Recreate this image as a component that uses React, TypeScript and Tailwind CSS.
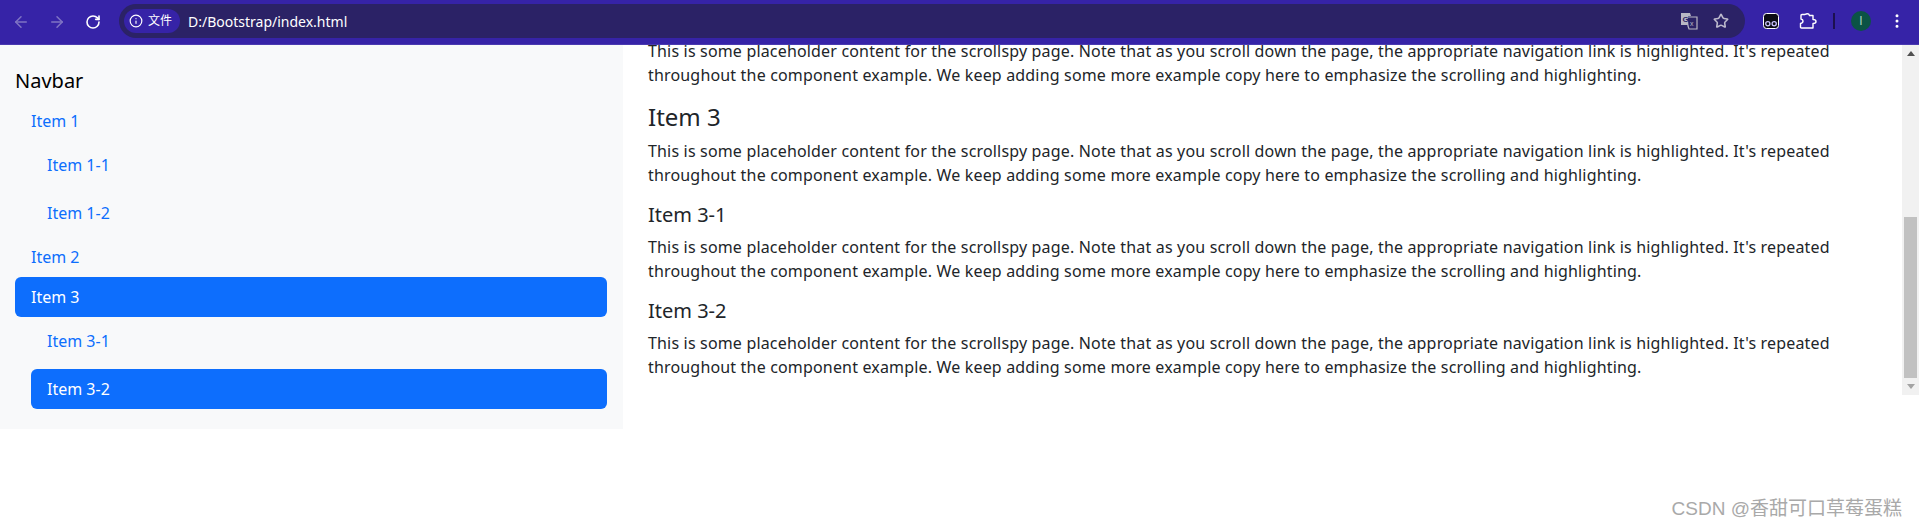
import { ArrowLeft, ArrowRight, RotateCw, Info, Star, EllipsisVertical } from "lucide-react";

const COPY =
  "This is some placeholder content for the scrollspy page. Note that as you scroll down the page, the appropriate navigation link is highlighted. It's repeated throughout the component example. We keep adding some more example copy here to emphasize the scrolling and highlighting.";

function NavItem({ label, active, sub }: { label: string; active?: boolean; sub?: boolean }) {
  return (
    <a
      className={`block h-10 px-4 py-2 leading-6 rounded-md ${sub ? "my-1" : ""} ${active ? "bg-[#0d6efd] text-white" : "text-[#0d6efd]"}`}
    >
      {label}
    </a>
  );
}

function TranslateIcon() {
  return (
    <svg width="18" height="18" viewBox="0 0 18 18">
      <path d="M1 1h9l1 3h-3v9H1z" fill="#b9b7c4" />
      <path d="M7 5h10v12H9l-1-3z" fill="none" stroke="#b9b7c4" strokeWidth="1.2" />
      <text x="2.5" y="9.5" fontSize="8" fontWeight="700" fill="#2b2266" fontFamily="Liberation Sans, sans-serif">G</text>
      <text x="10" y="14" fontSize="7" fill="#b9b7c4" fontFamily="Liberation Sans, sans-serif">x</text>
    </svg>
  );
}

function GlassesIcon() {
  return (
    <svg width="16" height="16" viewBox="0 0 16 16">
      <rect x="0.5" y="0.5" width="15" height="15" rx="3" fill="#0c0c14" stroke="#ffffff" />
      <circle cx="4.8" cy="10.8" r="2.1" fill="#0c0c14" stroke="#c9c2ff" strokeWidth="1.3" />
      <circle cx="11.2" cy="10.8" r="2.1" fill="#0c0c14" stroke="#c9c2ff" strokeWidth="1.3" />
    </svg>
  );
}

function PuzzleIcon() {
  return (
    <svg width="18" height="16" viewBox="0 0 18 16" fill="none" stroke="#ffffff" strokeWidth="1.4" strokeLinejoin="round">
      <path d="M2 2.5Q2 1.5 3 1.5H6Q7 .8 8.5 .8Q10 .8 10.5 2.5H14V6.5Q17 6.5 17 8.5Q17 10.5 14 10.5V15H2.5Q1.5 15 1.5 14V10.5Q4 10 4 8Q4 6.5 2 6Z" />
    </svg>
  );
}

function Toolbar() {
  return (
    <div className="h-[45px] shrink-0 flex items-center bg-[#3623a7] border-b border-[#4a3ab0] font-['Noto_Sans','Noto_Sans_CJK_SC',sans-serif]">
      <div className="flex items-center w-[119px] pl-[12px] gap-[18px] -mt-px">
        <ArrowLeft size={18} className="text-[#7f74c4]" />
        <ArrowRight size={18} className="text-[#7f74c4]" />
        <RotateCw size={16} strokeWidth={2.4} className="text-white ml-px" />
      </div>
      <div className="flex-1 h-[34px] -mt-[2px] rounded-full bg-[#2b2266] flex items-center pl-[5px] pr-[16px]">
        <div className="h-6 w-14 rounded-full bg-[#3623a7] flex items-center pl-[5px] gap-[5px] text-white text-xs">
          <Info size={14} />
          <span>文件</span>
        </div>
        <span className="ml-[8px] text-white text-[14px]">D:/Bootstrap/index.html</span>
        <div className="ml-auto flex items-center gap-[15px]">
          <TranslateIcon />
          <Star size={16} className="text-[#bcb9cc]" strokeWidth={2.4} />
        </div>
      </div>
      <div className="w-[174px] flex items-center -mt-[2px] pl-[18px]">
        <GlassesIcon />
        <div className="ml-5"><PuzzleIcon /></div>
        <div className="ml-[16px] w-[2px] h-4 bg-[#1c1050]" />
        <div className="ml-4 w-5 h-5 rounded-full bg-[#0b5345] flex items-center justify-center text-[#a8d0c3] text-xs font-['Liberation_Sans',sans-serif]">I</div>
        <EllipsisVertical size={18} className="ml-[17px] text-white" />
      </div>
    </div>
  );
}

function Sidebar() {
  return (
    <nav className="w-[623px] shrink-0 h-[384px] bg-[#f8f9fa] pl-[15px] pr-4 py-4 flex flex-col">
      <a className="block h-10 py-[5px] text-xl leading-[30px] text-black">Navbar</a>
      <NavItem label="Item 1" />
      <div className="ml-4 flex flex-col">
        <NavItem label="Item 1-1" sub />
        <NavItem label="Item 1-2" sub />
      </div>
      <NavItem label="Item 2" />
      <NavItem label="Item 3" active />
      <div className="ml-4 flex flex-col">
        <NavItem label="Item 3-1" sub />
        <NavItem label="Item 3-2" active sub />
      </div>
    </nav>
  );
}

function Scrollbar() {
  return (
    <div className="w-[17px] shrink-0 bg-[#f1f1f1] flex flex-col items-center">
      <div className="h-[17px] flex items-center justify-center">
        <div className="border-x-4 border-x-transparent border-b-[5px] border-b-[#505050]" />
      </div>
      <div className="h-[155px]" />
      <div className="w-[13px] flex-1 bg-[#c1c1c1]" />
      <div className="h-[17px] flex items-center justify-center">
        <div className="border-x-4 border-x-transparent border-t-[5px] border-t-[#a3a3a3]" />
      </div>
    </div>
  );
}

function Content() {
  return (
    <div className="flex-1 flex h-[350px]">
      <div className="flex-1 overflow-hidden pl-[25px] pr-[60px] text-[#212529]">
        <p className="-mt-[6px] mb-[15px] leading-6 tracking-[0.17px]">{COPY}</p>
        <h4 className="text-2xl leading-[29px] mb-2">Item 3</h4>
        <p className="mb-4 leading-6 tracking-[0.17px]">{COPY}</p>
        <h5 className="text-xl leading-6 mb-2">Item 3-1</h5>
        <p className="mb-4 leading-6 tracking-[0.17px]">{COPY}</p>
        <h5 className="text-xl leading-6 mb-2">Item 3-2</h5>
        <p className="mb-4 leading-6 tracking-[0.17px]">{COPY}</p>
      </div>
      <Scrollbar />
    </div>
  );
}

export default function App() {
  return (
    <div className="relative w-[1919px] h-[530px] overflow-hidden bg-white flex flex-col font-['Noto_Sans','Noto_Sans_CJK_SC',sans-serif] text-base">
      <Toolbar />
      <div className="flex items-start">
        <Sidebar />
        <Content />
      </div>
      <span className="absolute right-[17px] bottom-[7px] text-[19px] text-[#a9a9a9] font-['Liberation_Sans','Noto_Sans_CJK_SC',sans-serif]">
        CSDN @香甜可口草莓蛋糕
      </span>
    </div>
  );
}
